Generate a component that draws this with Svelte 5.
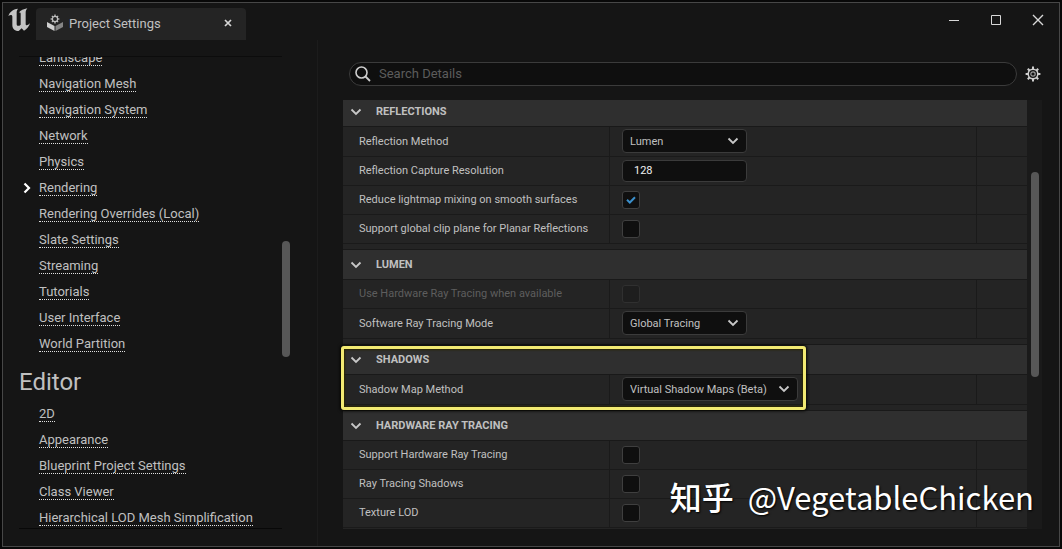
<script>
  const projectLinks = ['Landscape', 'Navigation Mesh', 'Navigation System', 'Network', 'Physics', 'Rendering', 'Rendering Overrides (Local)', 'Slate Settings', 'Streaming', 'Tutorials', 'User Interface', 'World Partition'];
  const editorLinks = ['2D', 'Appearance', 'Blueprint Project Settings', 'Class Viewer', 'Hierarchical LOD Mesh Simplification'];
  const sections = [
    { title: 'Reflections', rows: [
      { id: 'rm', label: 'Reflection Method', type: 'select', value: 'Lumen' },
      { id: 'rc', label: 'Reflection Capture Resolution', type: 'text', value: '128' },
      { id: 'rl', label: 'Reduce lightmap mixing on smooth surfaces', type: 'check', value: true },
      { id: 'gc', label: 'Support global clip plane for Planar Reflections', type: 'check', value: false }
    ] },
    { title: 'Lumen', rows: [
      { id: 'hw', label: 'Use Hardware Ray Tracing when available', type: 'check', value: false, disabled: true },
      { id: 'sw', label: 'Software Ray Tracing Mode', type: 'select', value: 'Global Tracing' }
    ] },
    { title: 'Shadows', highlight: true, rows: [
      { id: 'sm', label: 'Shadow Map Method', type: 'select', value: 'Virtual Shadow Maps (Beta)' }
    ] },
    { title: 'Hardware Ray Tracing', rows: [
      { id: 'sh', label: 'Support Hardware Ray Tracing', type: 'check', value: false },
      { id: 'rs', label: 'Ray Tracing Shadows', type: 'check', value: false },
      { id: 'tl', label: 'Texture LOD', type: 'check', value: false }
    ] }
  ];
  const teeth = [0, 45, 90, 135, 180, 225, 270, 315];
</script>

{#snippet chevron()}
  <svg class="chevron" width="12" height="8" viewBox="0 0 12 8" aria-hidden="true"><path d="M1.500 1.500 6 6l4.500-4.500" fill="none" stroke="#c8c8c8" stroke-width="1.800" /></svg>
{/snippet}

<div class="window">
  <header class="titlebar">
    <svg class="logo" width="23" height="23" viewBox="0 0 69 69" aria-hidden="true">
      <path fill="#c4c4c4" d="M1 24C5 12 14 4 30 2 27 6 26 9 26 14V48C26 55 33 55 38 50V18C38 14 36 13 32 14 38 7 47 3 58 1 54 6 53 9 53 14V48C53 54 59 53 66 46 63 56 57 63 48 68L41 61 32 69C20 70 13 62 13 52V26C13 20 8 19 1 24Z" />
    </svg>
    <div class="tab">
      <svg width="18" height="18" viewBox="0 0 18 18" aria-hidden="true">
        <path d="M1 8 8.500 12V17L1 13z" fill="#cfcfcf" />
        <path d="M9.500 12 17 8v5L9.500 17z" fill="#858585" />
        <circle cx="9" cy="5" r="2.600" fill="none" stroke="#c0c0c0" stroke-width="1.200" />
        {#each teeth as a}<path d="M9 .6v1.700" stroke="#c0c0c0" stroke-width="1.300" transform="rotate({a} 9 5)" />{/each}
      </svg>
      <span>Project Settings</span>
      <button class="icon close-tab" aria-label="Close tab"><svg width="8" height="8" viewBox="0 0 8 8"><path d="M1 1l6 6M7 1 1 7" stroke="#d6d6d6" stroke-width="1.700" /></svg></button>
    </div>
    <div class="controls">
      <button class="icon" aria-label="Minimize"><svg width="12" height="12" viewBox="0 0 12 12"><path d="M1 6.500h10" stroke="#d8d8d8" /></svg></button>
      <button class="icon" aria-label="Maximize"><svg width="12" height="12" viewBox="0 0 12 12"><path d="M1.500 1.500h9v9h-9z" fill="none" stroke="#d8d8d8" /></svg></button>
      <button class="icon" aria-label="Close"><svg width="12" height="12" viewBox="0 0 12 12"><path d="M1 1l10 10M11 1 1 11" stroke="#d8d8d8" stroke-width="1.400" /></svg></button>
    </div>
  </header>

  <div class="body">
    <nav class="sidebar">
      <div class="links">
        <ul>
          {#each projectLinks as name}
            <li>
              {#if name === 'Rendering'}<svg class="marker" width="8" height="12" viewBox="0 0 8 12" aria-hidden="true"><path d="M1.500 1.500 6 6l-4.500 4.500" fill="none" stroke="#fff" stroke-width="2.200" /></svg>{/if}
              <a href="#top">{name}</a>
            </li>
          {/each}
        </ul>
        <h2>Editor</h2>
        <ul>
          {#each editorLinks as name}<li><a href="#top">{name}</a></li>{/each}
        </ul>
      </div>
      <div class="track"><div class="thumb side-thumb"></div></div>
    </nav>

    <main class="details">
      <div class="searchrow">
        <label class="search">
          <svg width="18" height="18" viewBox="0 0 18 18" aria-hidden="true"><circle cx="7.500" cy="7.500" r="5.500" fill="none" stroke="#cdcdcd" stroke-width="1.600" /><path d="M11.500 11.500 16 16" stroke="#cdcdcd" stroke-width="1.800" /></svg>
          <input type="text" placeholder="Search Details" aria-label="Search Details" />
        </label>
        <button class="icon gear" aria-label="Settings">
          <svg width="16" height="16" viewBox="0 0 16 16">
            <circle cx="8" cy="8" r="4.800" fill="none" stroke="#cfcfcf" stroke-width="1.500" />
            <circle cx="8" cy="8" r="2.200" fill="none" stroke="#9a9a9a" stroke-width="1.200" />
            {#each teeth as a}<path d="M8 .6v2.400" stroke="#cfcfcf" stroke-width="2" transform="rotate({a} 8 8)" />{/each}
          </svg>
        </button>
      </div>
      <div class="scroller">
        <div class="list">
          {#each sections as section}
            <section>
              <h3><button>{@render chevron()}{section.title}</button></h3>
              {#each section.rows as row}
                <div class="row" class:tall={row.type === 'select'} class:disabled={row.disabled}>
                  <label for={row.id}>{row.label}</label>
                  <div class="value">
                    {#if row.type === 'select'}
                      <span class="picker"><select id={row.id}><option>{row.value}</option></select>{@render chevron()}</span>
                    {:else if row.type === 'text'}
                      <input class="number" id={row.id} type="text" value={row.value} />
                    {:else}
                      <span class="box">
                        <input id={row.id} type="checkbox" checked={row.value} disabled={row.disabled} />
                        <svg width="10" height="8" viewBox="0 0 10 8" aria-hidden="true"><path d="M1 3.800 3.800 6.500 9 1.300" fill="none" stroke="#3a8fcb" stroke-width="2" /></svg>
                      </span>
                    {/if}
                  </div>
                  <div class="reset"></div>
                </div>
              {/each}
              {#if section.highlight}<div class="highlight"></div>{/if}
            </section>
          {/each}
        </div>
        <div class="track wide"><div class="thumb main-thumb"></div></div>
      </div>
    </main>
  </div>
  <div class="watermark"><b>知乎</b><span>@VegetableChicken</span></div>
</div>

<style>
  :global(body) { background: #080808; }
  * { box-sizing: border-box; }
  .window {
    position: relative;
    height: calc(100vh - 4px);
    margin: 2px;
    border: 1px solid #474747;
    background: #151515;
    color: #c0c0c0;
    font-family: Roboto, sans-serif;
    font-size: 13px;
    display: flex;
    flex-direction: column;
    overflow: hidden;
  }
  button, input, select { font: inherit; color: inherit; }
  ul, h2, h3 { margin: 0; padding: 0; font-weight: 400; list-style: none; }
  .icon { display: flex; align-items: center; justify-content: center; padding: 0; border: 0; background: none; }
  .titlebar { display: flex; height: 37px; padding-left: 5px; flex: none; }
  .logo { margin: 5px 4px 0 0; }
  .tab {
    display: flex; align-items: center; gap: 5px;
    width: 210px; height: 32px; margin: 5px 0 0 1px; padding: 0 10px 2px;
    background: #242424; border-radius: 4px 4px 0 0;
  }
  .close-tab { width: 16px; height: 16px; margin-left: auto; }
  .controls { display: flex; margin-left: auto; }
  .controls .icon { width: 42px; height: 34px; }
  .body { display: flex; flex: 1; min-height: 0; }
  .sidebar { display: flex; width: 315px; flex: none; padding: 16px 27px 17px 16px; border-right: 1px solid #1c1c1c; }
  .links { flex: 1; overflow: hidden; border-top: 1px solid #0c0c0c; border-bottom: 1px solid #080808; }
  .links ul { padding-left: 20px; }
  .links ul:first-child { margin-top: -12px; }
  li { position: relative; display: flex; align-items: center; height: 26px; white-space: nowrap; }
  a { color: inherit; text-decoration: none; line-height: 15px; border-bottom: 1px dotted #e0e0e0; }
  .marker { position: absolute; left: -16px; }
  h2 { height: 44px; line-height: 50px; font-size: 24px; }
  .track { width: 8px; }
  .thumb { width: 8px; border-radius: 4px; background: #575757; }
  .side-thumb { margin-top: 185px; height: 116px; }
  .details { display: flex; flex-direction: column; flex: 1; min-width: 0; padding: 22px 17px 17px 25px; }
  .searchrow { display: flex; align-items: center; gap: 8px; height: 24px; margin: 0 1px 14px 6px; }
  .search { display: flex; align-items: center; gap: 7px; flex: 1; height: 24px; padding: 0 4px; border: 1px solid #3b3b3b; border-radius: 12px; background: #0f0f0f; }
  .search input { flex: 1; padding: 0 0 2px; border: 0; outline: 0; background: none; }
  .search input::placeholder { color: #5c5c5c; opacity: 1; }
  .scroller { display: flex; flex: 1; min-height: 0; margin-left: -6px; padding-left: 6px; overflow: hidden; }
  .list { flex: 1; margin-top: -3px; background: #242424; font-size: 11px; }
  section { position: relative; padding-bottom: 5px; border-bottom: 1px solid #191919; }
  h3 { height: 30px; background: #2f2f2f; border-bottom: 1px solid #191919; font-size: 11px; }
  h3 button { display: flex; align-items: center; gap: 14px; width: 100%; height: 29px; padding: 0 7px; border: 0; background: none; font-weight: 700; text-transform: uppercase; }
  .row { display: grid; grid-template-columns: 267px 1fr 51px; height: 29px; border-bottom: 1px solid #1a1a1a; }
  .row.tall { height: 30px; }
  .row label { display: flex; align-items: center; padding: 0 0 2px 16px; border-right: 1px solid #1a1a1a; white-space: nowrap; }
  .row.tall label { padding-bottom: 0; }
  .disabled label { color: #5e5e5e; }
  .value { display: flex; align-items: center; padding-left: 12px; }
  .tall .value { padding-bottom: 1px; }
  .reset { border-left: 1px solid #1a1a1a; }
  .picker { position: relative; display: flex; }
  .picker select { appearance: none; min-width: 125px; height: 24px; padding: 0 30px 0 7px; border: 1px solid #3b3b3b; border-radius: 4px; background: #0f0f0f; }
  .picker :global(.chevron) { position: absolute; right: 8px; top: 8px; pointer-events: none; }
  .number { width: 125px; height: 22px; padding: 0 11px 2px; border: 1px solid #3b3b3b; border-radius: 4px; background: #0f0f0f; color: #f0f0f0; }
  .box { position: relative; display: flex; }
  .box input { appearance: none; width: 18px; height: 18px; margin: 0; border: 1px solid #3f3f3f; border-radius: 3px; background: #0f0f0f; }
  .box svg { position: absolute; left: 4px; top: 5px; visibility: hidden; }
  .box input:checked + svg { visibility: visible; }
  .disabled .box input { background: #1e1e1e; border-color: #303030; }
  .track.wide { width: 15px; padding-left: 4px; background: #1a1a1a; }
  .main-thumb { margin-top: 72px; height: 205px; }
  .highlight { position: absolute; z-index: 1; left: -2px; top: 1px; bottom: 0; width: 465px; border: 3px solid #f2ea72; border-radius: 3px; box-shadow: 0 0 3px 1px #050500, inset 0 0 2px 1px #2a2600; pointer-events: none; }
  .watermark { position: absolute; right: 25px; bottom: 25px; z-index: 2; display: flex; align-items: baseline; gap: 14px; color: #fff; font-family: "Noto Sans CJK SC", sans-serif; font-size: 31px; line-height: 48px; text-shadow: 1px 1px 2px #000; white-space: nowrap; pointer-events: none; }
  .watermark b { font-size: 32px; font-weight: 500; }
</style>
